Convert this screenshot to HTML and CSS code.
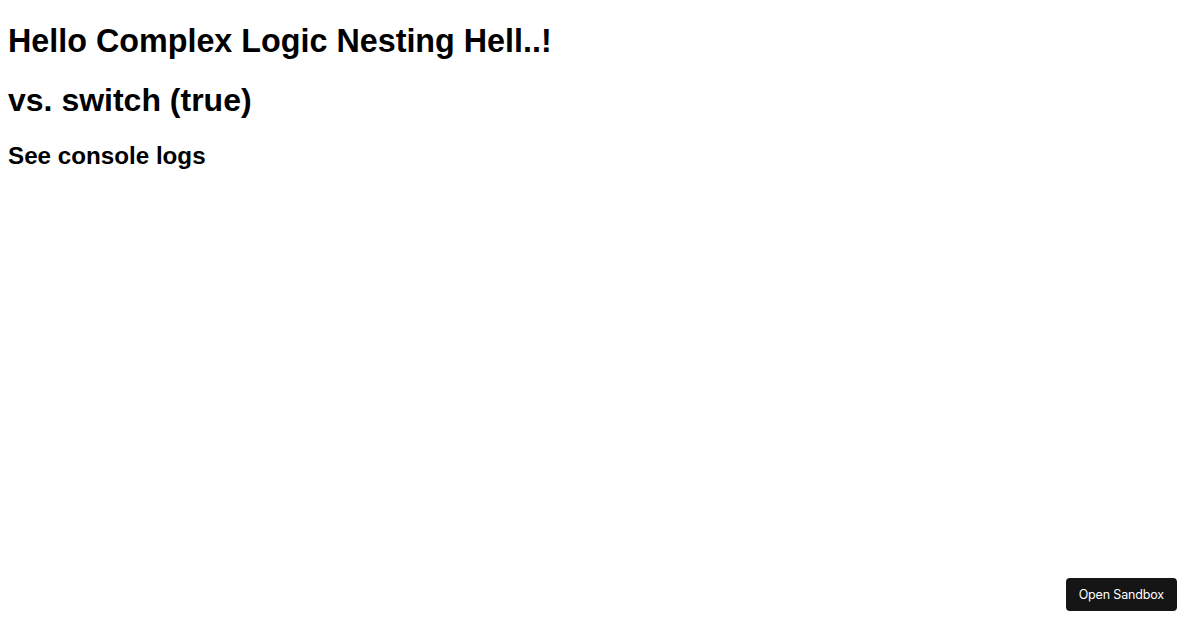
FILE: index.html
```html
<!DOCTYPE html>
<html>
<head>
<meta charset="utf-8">
<link rel="stylesheet" href="styles.css">
</head>
<body>
<div class="app">
<h1>Hello Complex Logic Nesting Hell..!</h1>
<h2>vs. switch (true)</h2>
<h3>See console logs</h3>
</div>
<a class="open-sandbox">Open Sandbox</a>
</body>
</html>
```
FILE: styles.css
```css
body {
  font-family: "Liberation Sans", Arial, sans-serif;
  color: #000;
  background: #fff;
}
h1, h2, h3 { line-height: 1.02; }
h1 { font-size: 32.3px; margin-top: 17px; }
h2 { font-size: 32px; }
h3 { font-size: 24.2px; }
.open-sandbox {
  position: fixed;
  right: 23px;
  bottom: 19px;
  height: 33px;
  box-sizing: border-box;
  padding: 0 13px;
  display: flex;
  align-items: center;
  background: #151515;
  color: #fff;
  border-radius: 4px;
  font-family: Inter, "Liberation Sans", sans-serif;
  font-size: 12.5px;
  letter-spacing: -0.15px;
}
```
